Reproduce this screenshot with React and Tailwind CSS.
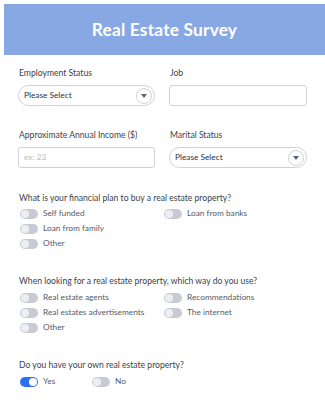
import React from 'react';

const font = { fontFamily: 'Lato, "Liberation Sans", sans-serif' };

function Toggle({ on, label }) {
  return (
    <div className="flex items-center h-[15px]">
      <span className={`relative inline-block shrink-0 w-[18px] h-[10px] rounded-full ${on ? 'bg-[#2e6ff0]' : 'bg-[#c8cbd4]'}`}>
        <span className={`absolute top-[1px] w-[8px] h-[8px] rounded-full ${on ? 'right-[1px] bg-white' : 'left-[1px] bg-[#eceef2]'}`}></span>
      </span>
      <span className="ml-[5px] text-[8.3px] text-[#555b68] whitespace-nowrap">{label}</span>
    </div>
  );
}

function SelectBox() {
  return (
    <div className="flex items-center justify-between h-[21px] border border-[#cfd2da] rounded-full pl-[5px] pr-[2px]">
      <span className="text-[8.3px] text-[#2c3345]">Please Select</span>
      <span className="flex items-center justify-center w-[16px] h-[16px] rounded-full border border-[#cfd2da] bg-white">
        <svg width="6" height="4" viewBox="0 0 6 4"><path d="M0 0h6L3 4z" fill="#5b6274" /></svg>
      </span>
    </div>
  );
}

function Label({ children }) {
  return <div className="text-[8.6px] text-[#3a3f4c] leading-[12px] h-[12px] pl-[1px] whitespace-nowrap">{children}</div>;
}

export default function App() {
  return (
    <div className="w-[325px] h-[400px] overflow-hidden bg-white pt-[4px] pl-[4px]" style={font}>
      <div className="h-[51px] bg-[#87a8e3] flex items-center justify-center">
        <h1 className="text-[17.3px] font-bold text-white tracking-[0.2px]">Real Estate Survey</h1>
      </div>
      <div className="pl-[14px] pr-[14px]">
        <div className="grid grid-cols-[137px_138px] gap-x-[14px] mt-[12px]">
          <div>
            <Label>Employment Status</Label>
            <div className="mt-[6px]"><SelectBox /></div>
          </div>
          <div>
            <Label>Job</Label>
            <div className="mt-[6px] h-[21px] border border-[#cfd2da] rounded-[3px]"></div>
          </div>
        </div>
        <div className="grid grid-cols-[137px_138px] gap-x-[14px] mt-[23px]">
          <div>
            <Label>Approximate Annual Income ($)</Label>
            <div className="mt-[6px] h-[21px] border border-[#cfd2da] rounded-[3px] flex items-center pl-[5px]">
              <span className="text-[8.3px] text-[#b7bac3]">ex: 23</span>
            </div>
          </div>
          <div>
            <Label>Marital Status</Label>
            <div className="mt-[6px]"><SelectBox /></div>
          </div>
        </div>

        <div className="mt-[24px]">
          <Label>What is your financial plan to buy a real estate property?</Label>
          <div className="grid grid-cols-[144px_1fr] mt-[2px] pl-[2px]">
            <Toggle label="Self funded" />
            <Toggle label="Loan from banks" />
            <Toggle label="Loan from family" />
            <div></div>
            <Toggle label="Other" />
          </div>
        </div>

        <div className="mt-[24px]">
          <Label>When looking for a real estate property, which way do you use?</Label>
          <div className="grid grid-cols-[144px_1fr] mt-[3px] pl-[2px]">
            <Toggle label="Real estate agents" />
            <Toggle label="Recommendations" />
            <Toggle label="Real estates advertisements" />
            <Toggle label="The internet" />
            <Toggle label="Other" />
          </div>
        </div>

        <div className="mt-[24px]">
          <Label>Do you have your own real estate property?</Label>
          <div className="flex mt-[3px] pl-[2px]">
            <div className="w-[72px]"><Toggle on label="Yes" /></div>
            <Toggle label="No" />
          </div>
        </div>
      </div>
    </div>
  );
}
